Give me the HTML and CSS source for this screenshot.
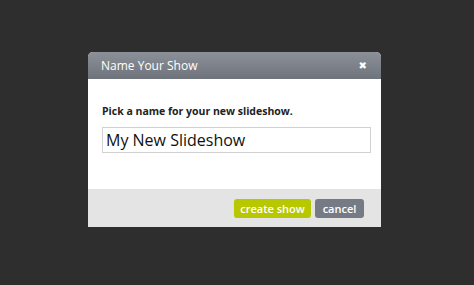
FILE: index.html
```html
<!DOCTYPE html>
<html lang="en">
<head>
    <meta charset="UTF-8">
    <title>Name Your Show</title>
    <link rel="stylesheet" href="styles.css">
</head>
<body>

<div class="dialog">
    <div class="dialog-header">
        <span class="dialog-title">Name Your Show</span>
        <span class="dialog-close">&#x2716;</span>
    </div>
    <div class="dialog-body">
        <label for="showName">Pick a name for your new slideshow.</label>
        <input type="text" id="showName" value="My New Slideshow">
    </div>
    <div class="dialog-footer">
        <button class="btn btn-create">create show</button>
        <button class="btn btn-cancel">cancel</button>
    </div>
</div>

</body>
</html>
```

FILE: styles.css
```css
body {
    margin: 0;
    background-color: #2e2e2e;
    font-family: "Open Sans", Arial, sans-serif;
    height: 285px;
    overflow: hidden;
}

.dialog {
    width: 293px;
    margin: 52px 0 0 88px;
    background: #fff;
    border-radius: 5px 5px 0 0;
    overflow: hidden;
}

.dialog-header {
    height: 27px;
    background: linear-gradient(#8c9098, #6f737b);
    display: flex;
    align-items: center;
    justify-content: space-between;
    padding: 0 14px 0 13px;
    color: #fff;
}

.dialog-title {
    font-size: 12px;
}

.dialog-close {
    font-size: 10px;
    font-family: "DejaVu Sans", sans-serif;
    font-weight: bold;
}

.dialog-body {
    height: 110px;
    box-sizing: border-box;
    padding: 25px 10px 0 14px;
}

.dialog-body label {
    display: block;
    font-size: 10.5px;
    font-weight: bold;
    color: #222;
}

.dialog-body input {
    display: block;
    margin-top: 9px;
    width: 269px;
    height: 26px;
    box-sizing: border-box;
    border: 1px solid #d2d2d2;
    padding: 0 3px;
    font-family: "Open Sans", Arial, sans-serif;
    font-size: 16px;
    color: #111;
    outline: none;
}

.dialog-footer {
    height: 38px;
    background: #e4e4e4;
    display: flex;
    justify-content: flex-end;
    align-items: center;
    gap: 4px;
    padding: 0 17px 0 0;
}

.btn {
    height: 19px;
    border: none;
    border-radius: 3px;
    color: #fff;
    font-family: "Open Sans", Arial, sans-serif;
    font-size: 11px;
    font-weight: 600;
    padding: 0;
    white-space: nowrap;
    cursor: pointer;
}

.btn-create {
    width: 77px;
    background-color: #b7c800;
}

.btn-cancel {
    width: 49px;
    background-color: #757a84;
}
```
